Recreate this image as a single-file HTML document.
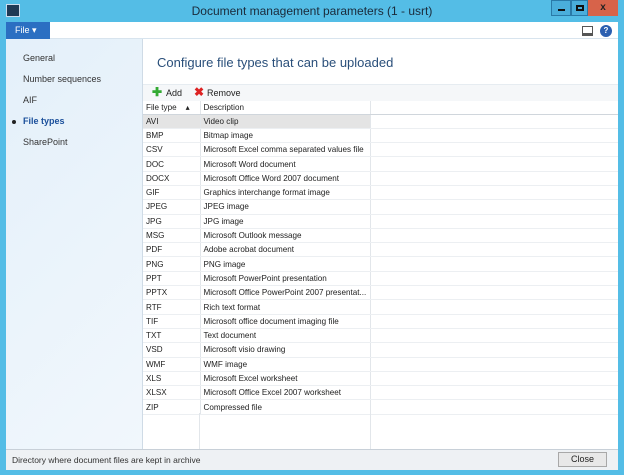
<!DOCTYPE html><html><head><style>
*{margin:0;padding:0;box-sizing:border-box}
body{width:624px;height:475px;background:#54bde6;font-family:"Liberation Sans",sans-serif;position:relative;overflow:hidden;color:#222}
.abs{position:absolute}
.title{left:0;top:0;width:624px;height:22px;text-align:center;font-size:12px;line-height:22px;color:#1a2a3a}
.win{left:6px;top:22px;width:612px;height:448px;background:#fff}
.menu{left:6px;top:22px;width:612px;height:17px;background:#fff;border-bottom:1px solid #d8e4ee}
.file{left:6px;top:22px;width:44px;height:17px;background:#2b6fc2;color:#fff;font-size:9px;line-height:17px;padding-left:9px}
.nav{left:6px;top:39px;width:137px;height:410px;background:linear-gradient(135deg,#e4f0fa,#f1f7fc);border-right:1px solid #cfdbe6}
.nav div{position:absolute;left:17px;font-size:9px;color:#333}
.head{left:157px;top:55px;font-size:13px;color:#2a4f7a}
.tb{left:143px;top:84px;width:475px;height:17px;background:#f5f7f9;border-top:1px solid #e6ecf1}
.tb span{position:absolute;top:3px;font-size:9px;color:#222}
table{position:absolute;left:143px;top:101px;border-collapse:collapse;font-size:8.1px;table-layout:fixed;width:475px}
td{height:14.3px;padding-left:3px;border-bottom:1px solid #eceff2;border-right:1px solid #e2e6ea;white-space:nowrap;overflow:hidden}
tr.h td{height:13px;background:#fff;border-bottom:1px solid #d0d6dc}
.col{position:absolute;top:413px;height:36px;border-right:1px solid #e2e6ea}
.status{left:6px;top:449px;width:612px;height:21px;background:#eef1f4;border-top:1px solid #c8d0d8;font-size:8.5px;line-height:21px;padding-left:6px;color:#333}
.close{left:558px;top:452px;width:49px;height:15px;background:#e8e8e8;border:1px solid #a8a8a8;font-size:9px;text-align:center;line-height:13px}
</style></head><body>
<div class="abs" style="left:6px;top:4px;width:14px;height:13px;background:#1f3a56;border:1px solid #cde"></div>
<div class="abs title">Document management parameters (1 - usrt)</div>
<div class="abs" style="left:551px;top:0;width:20px;height:16px;background:#4aaedb;border:1px solid #2a7aa8"><div style="margin:8px 6px 0;width:7px;height:2px;background:#111"></div></div>
<div class="abs" style="left:571px;top:0;width:17px;height:16px;background:#4aaedb;border:1px solid #2a7aa8"><div style="margin:4px 4px 0;width:8px;height:6px;border:2px solid #111"></div></div>
<div class="abs" style="left:588px;top:0;width:30px;height:16px;background:#d7634a;color:#222;font-size:10px;font-weight:bold;text-align:center;line-height:15px">x</div>
<div class="abs win"></div>
<div class="abs menu"></div>
<div class="abs file">File &#9662;</div>
<div class="abs" style="left:582px;top:26px;width:11px;height:10px;border:1px solid #555;border-bottom-width:3px"></div>
<div class="abs" style="left:600px;top:25px;width:12px;height:12px;border-radius:50%;background:#2b5fb0;color:#fff;font-size:8px;text-align:center;line-height:12px;font-weight:bold">?</div>
<div class="abs nav">
<div style="top:14px">General</div>
<div style="top:35px">Number sequences</div>
<div style="top:56px">AIF</div>
<div style="top:77px;color:#1a4f9a;font-weight:bold;left:17px">File types</div>
<div style="top:81px;left:6px;width:4px;height:4px;border-radius:50%;background:#222"></div>
<div style="top:98px">SharePoint</div>
</div>
<div class="abs head">Configure file types that can be uploaded</div>
<div class="abs tb"><span style="left:9px;color:#3a3;font-weight:bold;font-size:12px;top:0">✚</span><span style="left:23px">Add</span><span style="left:51px;color:#d22;font-weight:bold;font-size:12px;top:0">✖</span><span style="left:64px">Remove</span></div>
<table>
<colgroup><col style="width:57px"><col style="width:170px"><col style="width:248px"></colgroup>
<tr class="h"><td>File type &nbsp;&nbsp;&nbsp;&#9652;</td><td>Description</td><td style="border-right:none"></td></tr>
<tr style="background:#e4e4e4"><td>AVI</td><td>Video clip</td><td style="background:#fff;border-right:none"></td></tr>
<tr><td>BMP</td><td>Bitmap image</td><td style="border-right:none"></td></tr>
<tr><td>CSV</td><td>Microsoft Excel comma separated values file</td><td style="border-right:none"></td></tr>
<tr><td>DOC</td><td>Microsoft Word document</td><td style="border-right:none"></td></tr>
<tr><td>DOCX</td><td>Microsoft Office Word 2007 document</td><td style="border-right:none"></td></tr>
<tr><td>GIF</td><td>Graphics interchange format image</td><td style="border-right:none"></td></tr>
<tr><td>JPEG</td><td>JPEG image</td><td style="border-right:none"></td></tr>
<tr><td>JPG</td><td>JPG image</td><td style="border-right:none"></td></tr>
<tr><td>MSG</td><td>Microsoft Outlook message</td><td style="border-right:none"></td></tr>
<tr><td>PDF</td><td>Adobe acrobat document</td><td style="border-right:none"></td></tr>
<tr><td>PNG</td><td>PNG image</td><td style="border-right:none"></td></tr>
<tr><td>PPT</td><td>Microsoft PowerPoint presentation</td><td style="border-right:none"></td></tr>
<tr><td>PPTX</td><td>Microsoft Office PowerPoint 2007 presentat...</td><td style="border-right:none"></td></tr>
<tr><td>RTF</td><td>Rich text format</td><td style="border-right:none"></td></tr>
<tr><td>TIF</td><td>Microsoft office document imaging file</td><td style="border-right:none"></td></tr>
<tr><td>TXT</td><td>Text document</td><td style="border-right:none"></td></tr>
<tr><td>VSD</td><td>Microsoft visio drawing</td><td style="border-right:none"></td></tr>
<tr><td>WMF</td><td>WMF image</td><td style="border-right:none"></td></tr>
<tr><td>XLS</td><td>Microsoft Excel worksheet</td><td style="border-right:none"></td></tr>
<tr><td>XLSX</td><td>Microsoft Office Excel 2007 worksheet</td><td style="border-right:none"></td></tr>
<tr><td>ZIP</td><td>Compressed file</td><td style="border-right:none"></td></tr>
</table>
<div class="col" style="left:143px;width:57px"></div>
<div class="col" style="left:200px;width:171px"></div>
<div class="abs status">Directory where document files are kept in archive</div>
<div class="abs close">Close</div>
</body></html>
